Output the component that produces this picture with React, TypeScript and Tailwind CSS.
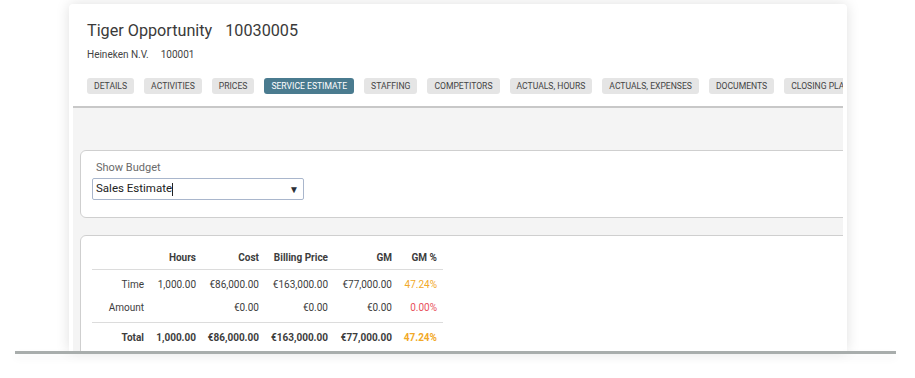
import React from "react";

const tabs = [
  "DETAILS",
  "ACTIVITIES",
  "PRICES",
  "SERVICE ESTIMATE",
  "STAFFING",
  "COMPETITORS",
  "ACTUALS, HOURS",
  "ACTUALS, EXPENSES",
  "DOCUMENTS",
  "CLOSING PLAN",
];

const widths = ["w-[58px]", "w-[52px]", "w-[63px]", "w-[69px]", "w-[64px]", "w-[45px]"];

function Row({
  cells,
  bold,
  className,
}: {
  cells: { t: string; c?: string }[];
  bold?: boolean;
  className?: string;
}) {
  return (
    <div className={"flex " + (className ?? "")}>
      {cells.map((cell, i) => (
        <div
          key={i}
          className={
            widths[i] +
            " shrink-0 pr-[6px] text-right whitespace-nowrap " +
            (bold ? "font-bold " : "") +
            (cell.c ?? "text-[#3d3d3d]")
          }
        >
          {cell.t}
        </div>
      ))}
    </div>
  );
}

export default function App() {
  return (
    <div className="w-[915px] h-[378px] bg-white overflow-hidden font-['Roboto',sans-serif]">
      <div className="pt-[4px] pl-[69px]">
        <div className="w-[778px] h-[347px] bg-white rounded-t-[4px] shadow-[0_0_14px_rgba(0,0,0,0.13)] overflow-hidden flex flex-col">
          {/* header */}
          <div className="pl-[18px] pr-[4px] pt-[16px]">
            <div className="text-[16.2px] leading-[22px] text-[#3a3a3a] flex gap-[13px]">
              <span>Tiger Opportunity</span>
              <span>10030005</span>
            </div>
            <div className="mt-[6px] text-[10px] leading-[14px] text-[#444] flex gap-[12px]">
              <span>Heineken N.V.</span>
              <span>100001</span>
            </div>
            <div className="mt-[16px] flex gap-[10px] overflow-hidden whitespace-nowrap">
              {tabs.map((t) => (
                <div
                  key={t}
                  className={
                    "shrink-0 h-[16px] px-[7px] rounded-[3px] text-[8.6px] leading-[16px] " +
                    (t === "SERVICE ESTIMATE"
                      ? "bg-[#4a7b8f] text-white"
                      : "bg-[#e5e5e5] text-[#444]")
                  }
                >
                  {t}
                </div>
              ))}
            </div>
          </div>
          {/* content */}
          <div className="mt-[12px] mx-[4px] flex-1 bg-[#f4f4f4] border-t-2 border-[#c8c8c8] overflow-hidden">
            <div className="pl-[7px] pt-[42px] w-[820px]">
              <div className="h-[68px] bg-white border border-[#cfcfcf] rounded-l-[6px] pl-[11px] pt-[10px]">
                <div className="pl-[4px] text-[11px] leading-[14px] text-[#6a6a6a]">Show Budget</div>
                <div className="mt-[3px] w-[212px] h-[22px] border border-[#a9b6cc] rounded-[2px] flex items-center justify-between pl-[3px] pr-[4px]">
                  <span className="text-[11.5px] text-[#222] flex items-center">
                    Sales Estimate
                    <span className="inline-block w-[1px] h-[13px] bg-[#222]" />
                  </span>
                  <span className="text-[10px] text-[#2b2f36]">▼</span>
                </div>
              </div>
              <div className="mt-[17px] h-[200px] bg-white border border-[#cfcfcf] rounded-l-[6px] pl-[11px] pt-[10px] text-[10px]">
                <Row
                  bold
                  className="h-[24px] items-center border-b border-[#dcdcdc] w-[351px]"
                  cells={[
                    { t: "" },
                    { t: "Hours" },
                    { t: "Cost" },
                    { t: "Billing Price" },
                    { t: "GM" },
                    { t: "GM %" },
                  ]}
                />
                <Row
                  className="h-[24px] items-center mt-[2px]"
                  cells={[
                    { t: "Time" },
                    { t: "1,000.00" },
                    { t: "€86,000.00" },
                    { t: "€163,000.00" },
                    { t: "€77,000.00" },
                    { t: "47.24%", c: "text-[#f2a928]" },
                  ]}
                />
                <Row
                  className="h-[27px] pb-[3px] items-center border-b border-[#dcdcdc] w-[351px]"
                  cells={[
                    { t: "Amount" },
                    { t: "" },
                    { t: "€0.00" },
                    { t: "€0.00" },
                    { t: "€0.00" },
                    { t: "0.00%", c: "text-[#e8505b]" },
                  ]}
                />
                <Row
                  bold
                  className="h-[28px] items-center"
                  cells={[
                    { t: "Total" },
                    { t: "1,000.00" },
                    { t: "€86,000.00" },
                    { t: "€163,000.00" },
                    { t: "€77,000.00" },
                    { t: "47.24%", c: "text-[#f2a928]" },
                  ]}
                />
              </div>
            </div>
          </div>
        </div>
      </div>
      <div className="ml-[15px] w-[881px] h-[3px] bg-[#a8adac] shadow-[0_4px_8px_rgba(0,0,0,0.06)]" />
    </div>
  );
}
